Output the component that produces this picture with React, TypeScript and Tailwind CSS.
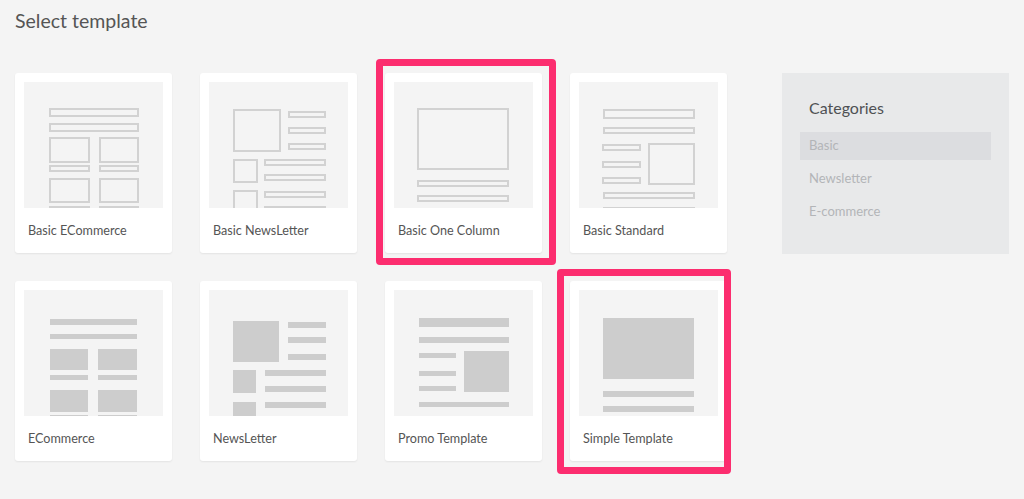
import React from "react";

type R = [number, number, number, number];

const outlined: Record<string, R[]> = {
  ecom: [
    [25, 26, 90, 9], [25, 41, 90, 9],
    [25, 55, 41, 26], [75, 55, 40, 26],
    [25, 83, 41, 7], [75, 83, 40, 7],
    [25, 96, 41, 25], [75, 96, 40, 25],
    [25, 124, 41, 7], [75, 124, 40, 7],
  ],
  news: [
    [24, 27, 48, 43], [79, 29, 38, 7], [79, 45, 38, 7], [79, 61, 38, 7],
    [24, 77, 25, 24], [55, 77, 62, 7], [55, 92, 62, 7],
    [24, 108, 25, 24], [55, 109, 62, 7], [55, 124, 62, 7],
  ],
  one: [
    [23, 26, 92, 62], [23, 98, 92, 7], [23, 113, 92, 7],
  ],
  std: [
    [24, 27, 92, 10], [24, 45, 92, 7],
    [23, 62, 39, 7], [23, 79, 39, 7], [23, 95, 39, 7],
    [69, 61, 47, 42], [24, 110, 92, 7], [24, 125, 92, 6],
  ],
};

const filled: Record<string, R[]> = {
  ecom: [
    [26, 29, 87, 6], [26, 44, 87, 5],
    [26, 59, 38, 21], [74, 59, 39, 21],
    [26, 85, 38, 5], [74, 85, 39, 5],
    [26, 100, 38, 22], [74, 100, 39, 22],
    [26, 125, 38, 4], [74, 125, 39, 4],
  ],
  news: [
    [24, 31, 46, 41], [79, 32, 38, 6], [79, 47, 38, 6], [79, 64, 38, 6],
    [24, 80, 23, 23], [56, 80, 61, 6], [56, 96, 61, 6], [56, 112, 61, 6],
    [24, 112, 23, 20],
  ],
  promo: [
    [25, 28, 90, 9], [25, 47, 90, 6],
    [25, 63, 37, 5], [25, 81, 37, 5], [25, 96, 37, 5],
    [70, 61, 45, 41], [25, 112, 90, 5],
  ],
  simple: [
    [24, 28, 91, 61], [24, 101, 91, 6], [24, 116, 91, 6],
  ],
};

function Wire({ rects, fill }: { rects: R[]; fill: boolean }) {
  return (
    <svg width="139" height="126" viewBox="0 0 139 126" className="block">
      {rects.map(([x, y, w, h], i) =>
        fill ? (
          <rect key={i} x={x} y={y} width={w} height={h} fill="#cdcdcd" />
        ) : (
          <rect
            key={i}
            x={x + 1}
            y={y + 1}
            width={w - 2}
            height={h - 2}
            fill="none"
            stroke="#d2d2d2"
            strokeWidth="2"
          />
        )
      )}
    </svg>
  );
}

function Card({ label, rects, fill }: { label: string; rects: R[]; fill: boolean }) {
  return (
    <div className="h-[180px] w-[157px] rounded-[3px] bg-white p-[9px] pb-0 shadow-[0_1px_2px_rgba(0,0,0,0.07)]">
      <div className="h-[126px] w-[139px] bg-[#f4f4f4]">
        <Wire rects={rects} fill={fill} />
      </div>
      <div className="mt-[15px] pl-[4px] text-[12.6px] leading-[16px] text-[#555]">{label}</div>
    </div>
  );
}

export default function App() {
  return (
    <div className="relative min-h-screen bg-[#f4f4f4] font-['Lato',sans-serif]">
      <h1 className="pl-[15px] pt-[9px] text-[19.5px] leading-[24px] text-[#555]">Select template</h1>
      <div className="mt-[40px] flex items-start pl-[15px]">
        <div className="grid grid-cols-[repeat(4,157px)] gap-[28px]">
          <Card label="Basic ECommerce" rects={outlined.ecom} fill={false} />
          <Card label="Basic NewsLetter" rects={outlined.news} fill={false} />
          <Card label="Basic One Column" rects={outlined.one} fill={false} />
          <Card label="Basic Standard" rects={outlined.std} fill={false} />
          <Card label="ECommerce" rects={filled.ecom} fill={true} />
          <Card label="NewsLetter" rects={filled.news} fill={true} />
          <Card label="Promo Template" rects={filled.promo} fill={true} />
          <Card label="Simple Template" rects={filled.simple} fill={true} />
        </div>
        <aside className="ml-[55px] h-[181px] w-[227px] bg-[#e8e9ea] px-[18px] pt-[25px]">
          <h2 className="pl-[9px] text-[16px] leading-[20px] text-[#4f5154]">Categories</h2>
          <ul className="mt-[14px] flex flex-col gap-[5px] text-[13px] text-[#b3b5b8]">
            <li className="flex h-[28px] items-center bg-[#dcdde0] pl-[9px]">Basic</li>
            <li className="flex h-[28px] items-center pl-[9px]">Newsletter</li>
            <li className="flex h-[28px] items-center pl-[9px]">E-commerce</li>
          </ul>
        </aside>
      </div>
      <div className="pointer-events-none absolute left-[376px] top-[59px] h-[206px] w-[180px] rounded-[4px] border-[7px] border-[#fc2d6f]" />
      <div className="pointer-events-none absolute left-[557px] top-[269px] h-[205px] w-[174px] rounded-[4px] border-[7px] border-[#fc2d6f]" />
    </div>
  );
}
